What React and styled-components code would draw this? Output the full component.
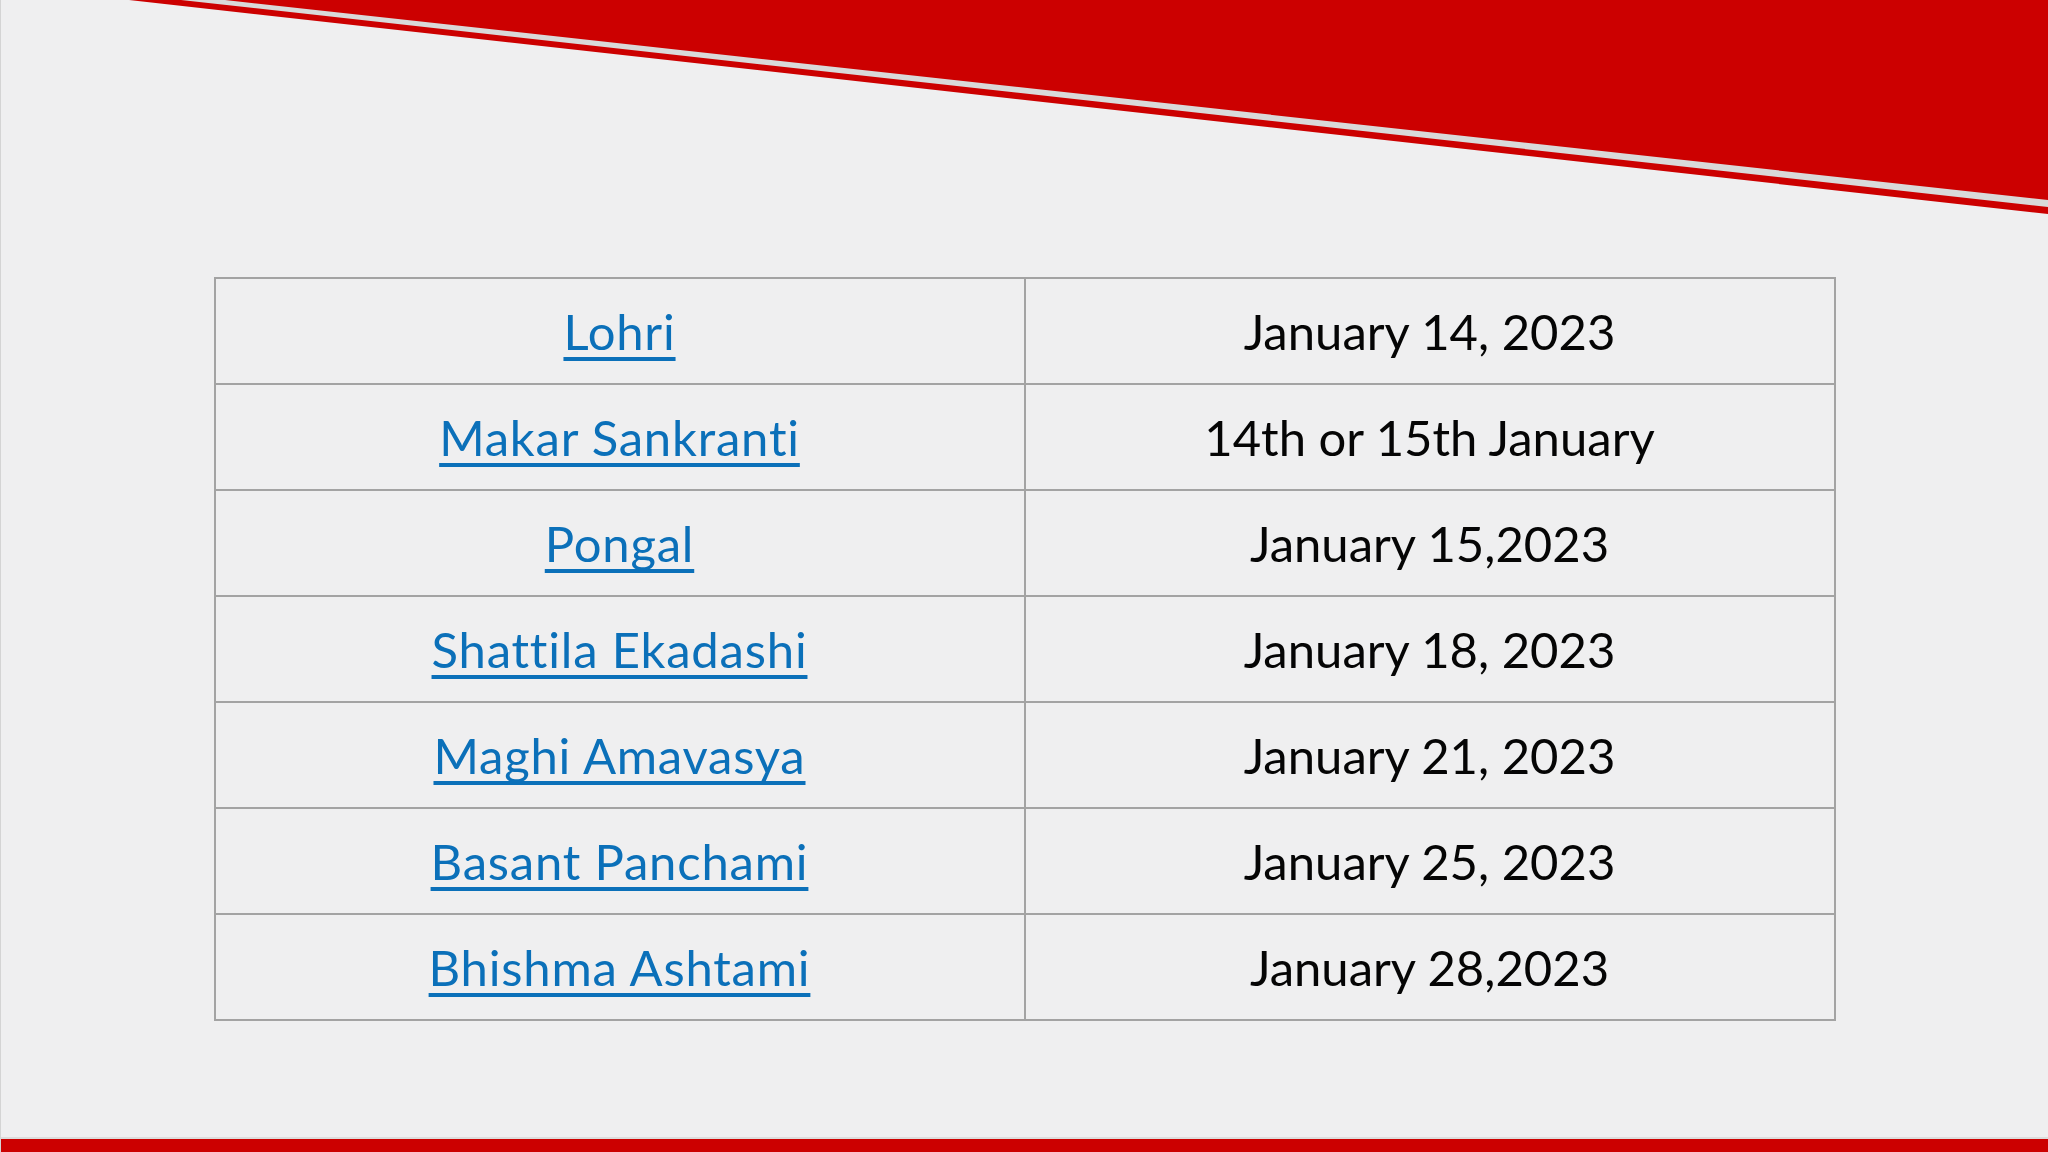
import styled, { createGlobalStyle } from 'styled-components';

const GlobalStyle = createGlobalStyle`
    html, body {
        margin: 0;
        padding: 0;
        background: #efeff0;
    }
    body {
        font-family: Lato, "Open Sans", "Liberation Sans", sans-serif;
    }
`

const Page = styled.div`
    width: 2048px;
    height: 1152px;
    display: flex;
    flex-direction: column;
    overflow: hidden;
    background: #efeff0;
    border-left: 1px solid #d4d4d4;
    box-sizing: border-box;
`

const Banner = styled.svg`
    display: block;
    flex: none;
    width: 100%;
    height: 216px;
`

const Main = styled.main`
    flex: 1;
    display: flex;
    justify-content: center;
    align-items: flex-start;
    padding-top: 61px;
`

const Table = styled.table`
    width: 1622px;
    border-collapse: collapse;
    table-layout: fixed;
    border: 2px solid #a3a3a3;
`

const Cell = styled.td`
    height: 104px;
    padding: 0;
    border: 2px solid #a3a3a3;
    text-align: center;
    vertical-align: middle;
    font-size: 49px;
    font-variant-ligatures: none;
    color: #050505;
    line-height: 1;
`

const Link = styled.a`
    color: #0b70b9;
    letter-spacing: 0.8px;
    text-decoration: underline;
    text-decoration-thickness: 4px;
    text-decoration-skip-ink: none;
    text-underline-offset: 7px;
`

const Footer = styled.footer`
    flex: none;
    height: 13px;
    background: #cc0000;
    border-top: 2px solid #dcdcdc;
`

const festivals = [
    { name: 'Lohri', date: 'January 14, 2023' },
    { name: 'Makar Sankranti', date: '14th or 15th January' },
    { name: 'Pongal', date: 'January 15,2023' },
    { name: 'Shattila Ekadashi', date: 'January 18, 2023' },
    { name: 'Maghi Amavasya', date: 'January 21, 2023' },
    { name: 'Basant Panchami', date: 'January 25, 2023' },
    { name: 'Bhishma Ashtami', date: 'January 28,2023' },
]

function App() {
    return (
        <>
            <GlobalStyle />
            <Page>
                <Banner viewBox="0 0 2047 216" preserveAspectRatio="none">
                    <polygon points="128,0 2047,0 2047,214" fill="#cc0000" />
                    <polygon points="180,0 2047,0 2047,207" fill="#d9d9d9" />
                    <polygon points="224,0 2047,0 2047,200" fill="#cc0000" />
                </Banner>
                <Main>
                    <Table>
                        <tbody>
                            {festivals.map((f) => (
                                <tr key={f.name}>
                                    <Cell>
                                        <Link href="#">{f.name}</Link>
                                    </Cell>
                                    <Cell>{f.date}</Cell>
                                </tr>
                            ))}
                        </tbody>
                    </Table>
                </Main>
                <Footer />
            </Page>
        </>
    )
}

export default App
